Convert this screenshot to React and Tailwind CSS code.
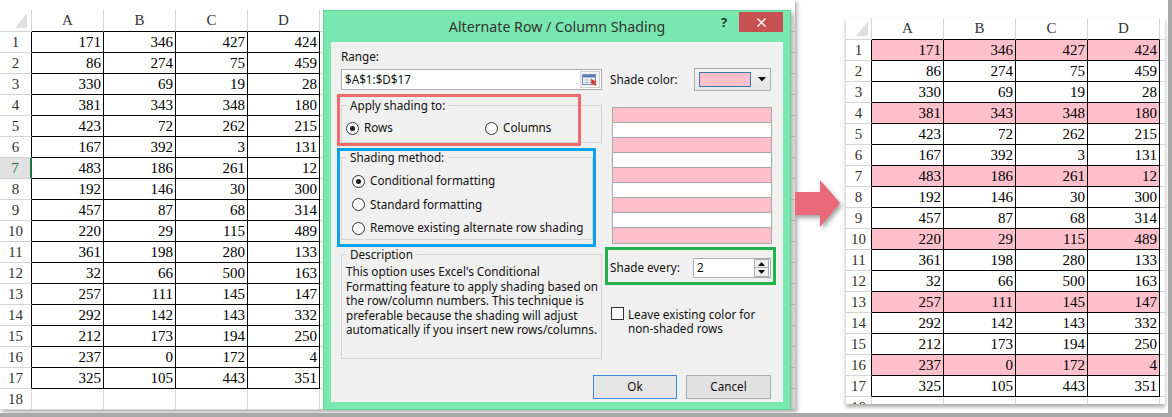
import React from 'react';

const DATA = [
  [171, 346, 427, 424],
  [86, 274, 75, 459],
  [330, 69, 19, 28],
  [381, 343, 348, 180],
  [423, 72, 262, 215],
  [167, 392, 3, 131],
  [483, 186, 261, 12],
  [192, 146, 30, 300],
  [457, 87, 68, 314],
  [220, 29, 115, 489],
  [361, 198, 280, 133],
  [32, 66, 500, 163],
  [257, 111, 145, 147],
  [292, 142, 143, 332],
  [212, 173, 194, 250],
  [237, 0, 172, 4],
  [325, 105, 443, 351],
];

const LETTERS = 'ABCDEFGHIJK'.split('');

// one excel grid, table A1:D17 drawn with black borders
function Sheet({ headW, cornerPad, extra, shaded = [], selected }) {
  const extraCols = LETTERS.slice(4, 4 + extra);
  return (
    <div className="font-['Liberation_Serif','Times_New_Roman',serif] text-[15px] text-black">
      <div className="flex h-[22px]">
        <div className={`${headW} ${cornerPad} shrink-0 border-r border-b border-[#d4d4d4] flex items-end justify-end pb-[3px]`}>
          <svg width="12" height="15"><polygon points="12,0 12,15 0,15" fill="#dfdfdf" /></svg>
        </div>
        {LETTERS.slice(0, 4).map((l) => (
          <div key={l} className="w-[72px] shrink-0 border-r border-r-[#d4d4d4] border-b border-b-black text-center leading-[21px] text-[#333]">{l}</div>
        ))}
        {/* columns past D are covered or cut off, so no letters */}
        {extraCols.map((l) => (
          <div key={l} className="w-[72px] shrink-0 border-r border-b border-[#d4d4d4]" />
        ))}
      </div>
      {DATA.map((row, i) => {
        const n = i + 1;
        const isSel = selected === n;
        const pink = shaded.includes(n);
        return (
          <div key={n} className="flex h-[21px]">
            <div className={`${headW} shrink-0 border-b border-b-[#d4d4d4] text-center leading-[20px] ${isSel ? 'bg-[#e1e1e1] border-r-2 border-r-[#217346] text-[#217346]' : 'border-r border-r-black text-[#333]'}`}>{n}</div>
            {row.map((v, j) => (
              <div key={j} className={`w-[72px] shrink-0 border-r border-b border-black text-right pr-[2px] leading-[20px] ${pink ? 'bg-[#ffc0cb]' : ''}`}>{v}</div>
            ))}
            {extraCols.map((l) => (
              <div key={l} className="w-[72px] shrink-0 border-r border-b border-[#d4d4d4]" />
            ))}
          </div>
        );
      })}
      <div className="flex h-[21px]">
        <div className={`${headW} shrink-0 border-r border-b border-[#d4d4d4] text-center leading-[20px] text-[#333]`}>18</div>
        {LETTERS.slice(0, 4 + extra).map((l) => (
          <div key={l} className="w-[72px] shrink-0 border-r border-b border-[#d4d4d4]" />
        ))}
      </div>
    </div>
  );
}

const Radio = ({ checked }) => (
  <span className="w-[13px] h-[13px] shrink-0 rounded-full border border-[#333] bg-white flex items-center justify-center">
    {checked && <span className="w-[5px] h-[5px] rounded-full bg-[#1a1a1a]" />}
  </span>
);

const Group = ({ label, className = '', children }) => (
  <fieldset className={`border border-[#d5d5d5] ${className}`}>
    <legend className="ml-[4px] px-[4px] leading-[16px]">{label}</legend>
    {children}
  </fieldset>
);

function Dialog() {
  return (
    <div className="absolute left-[323px] top-[10px] w-[468px] h-[400px] bg-[#78e8b0] border border-[#62d69c] shadow-[3px_3px_5px_rgba(0,0,0,0.3)] font-['Noto_Sans','Open_Sans',sans-serif] text-[11.7px] text-[#111]">
      {/* title bar */}
      <div className="relative h-[31px] flex items-center justify-center">
        <span className="text-[14.2px] text-[#333] mt-[1px]">Alternate Row / Column Shading</span>
        <span className="absolute left-[397px] top-[2px] text-[13px] font-bold text-[#333]">?</span>
        <div className="absolute right-[7px] top-[1px] w-[44px] h-[20px] bg-[#c75050] flex items-center justify-center">
          <svg width="9" height="9" viewBox="0 0 9 9"><path d="M0.5 0.5 L8.5 8.5 M8.5 0.5 L0.5 8.5" stroke="#fff" strokeWidth="1.4" /></svg>
        </div>
      </div>

      {/* client area */}
      <div className="mx-[7px] h-[360px] bg-[#f0f0f0] pl-[10px] pr-[11px] pt-[6px]">
        <div className="flex h-[312px]">
          <div className="w-[261px] shrink-0 flex flex-col">
            <div className="leading-[16px]">Range:</div>
            <div className="mt-[5px] h-[21px] border border-[#abadb3] bg-white flex items-center justify-between pl-[3px] pr-[1px]">
              <span>$A$1:$D$17</span>
              <span className="w-[20px] h-[17px] border border-[#d0d0d0] bg-[#f4f4f4] flex items-center justify-center">
                <svg width="16" height="12" viewBox="0 0 16 12">
                  <rect x="0.5" y="0.5" width="13" height="10" fill="#fff" stroke="#7a8ea8" />
                  <rect x="1" y="1" width="12" height="2.5" fill="#4f7fbf" />
                  <path d="M1 6 H13 M1 8.5 H13 M5 3.5 V10.5 M9 3.5 V10.5" stroke="#9aaec8" strokeWidth="0.8" />
                  <polygon points="9,5 15,8 12.5,8.6 14.5,11 13,11.8 11.2,9.4 9.5,11" fill="#d9301f" />
                </svg>
              </span>
            </div>

            <Group label="Apply shading to:" className="mt-[7px] pb-[6px]">
              <div className="flex items-center h-[16px] mt-[7px] pl-[4px]">
                <div className="w-[139px] flex items-center gap-[5px]"><Radio checked />Rows</div>
                <div className="flex items-center gap-[5px]"><Radio />Columns</div>
              </div>
            </Group>

            <Group label="Shading method:" className="mt-[6px] w-[252px] pb-[3px]">
              <div className="flex flex-col gap-[7.5px] mt-[8px] pl-[10px]">
                <div className="flex items-center gap-[5px] h-[16px]"><Radio checked />Conditional formatting</div>
                <div className="flex items-center gap-[5px] h-[16px]"><Radio />Standard formatting</div>
                <div className="flex items-center gap-[5px] h-[16px]"><Radio />Remove existing alternate row shading</div>
              </div>
            </Group>

            <Group label="Description" className="mt-[6px] h-[113px]">
              <p className="mt-[2px] pl-[4px] leading-[14.5px] whitespace-nowrap">
                This option uses Excel's Conditional<br />
                Formatting feature to apply shading based on<br />
                the row/column numbers. This technique is<br />
                preferable because the shading will adjust<br />
                automatically if you insert new rows/columns.
              </p>
            </Group>
          </div>

          <div className="w-[162px] ml-[8px] shrink-0 flex flex-col">
            <div className="mt-[20px] h-[23px] flex items-center justify-between pr-[1px]">
              <span>Shade color:</span>
              <div className="w-[77px] h-[23px] border border-[#acacac] bg-gradient-to-b from-[#f2f2f2] to-[#e5e5e5] flex items-center pl-[4px]">
                <span className="w-[52px] h-[15px] border border-[#3d7bad] bg-[#ffc0cb]" />
                <svg className="ml-[7px]" width="8" height="5" viewBox="0 0 8 5"><polygon points="0,0 8,0 4,4.5" fill="#111" /></svg>
              </div>
            </div>

            <div className="mt-[16px] ml-[2px] w-[160px] border border-[#a8a8a8] flex flex-col">
              {[0, 1, 2, 3, 4, 5, 6, 7, 8].map((i) => (
                <div key={i} className={`h-[15px] ${i < 8 ? 'border-b border-[#a8a8a8]' : ''} ${i % 2 === 0 ? 'bg-[#ffc0cb]' : 'bg-white'}`} />
              ))}
            </div>

            <div className="mt-[14px] h-[20px] flex items-center justify-between pr-[1px]">
              <span>Shade every:</span>
              <div className="w-[78px] h-[20px] border border-[#abadb3] bg-white flex items-center justify-between pl-[3px] pr-[1px]">
                <span>2</span>
                <div className="w-[15px] h-[18px] flex flex-col">
                  <span className="h-[9px] border border-[#acacac] bg-[#f0f0f0] flex items-center justify-center">
                    <svg width="7" height="4" viewBox="0 0 7 4"><polygon points="0,4 7,4 3.5,0" fill="#111" /></svg>
                  </span>
                  <span className="h-[9px] border border-t-0 border-[#acacac] bg-[#f0f0f0] flex items-center justify-center">
                    <svg width="7" height="4" viewBox="0 0 7 4"><polygon points="0,0 7,0 3.5,4" fill="#111" /></svg>
                  </span>
                </div>
              </div>
            </div>

            <div className="mt-[29px] flex items-start gap-[4px] ml-[1px]">
              <span className="w-[13px] h-[13px] shrink-0 border border-[#333] bg-white" />
              <span className="leading-[14px]">Leave existing color for<br />non-shaded rows</span>
            </div>
          </div>
        </div>

        <div className="mt-[15px] flex justify-end gap-[9px] pr-[1px]">
          <div className="w-[84px] h-[24px] border border-[#3c8be0] bg-[#e5e5e5] flex items-center justify-center">Ok</div>
          <div className="w-[85px] h-[24px] border border-[#adadad] bg-[#e1e1e1] flex items-center justify-center">Cancel</div>
        </div>
      </div>

      {/* annotation boxes drawn over the screenshot */}
      <div className="absolute left-[13px] top-[83px] w-[244px] h-[52px] border-[3px] border-[#f06a6a]" />
      <div className="absolute left-[13px] top-[137px] w-[259px] h-[99px] border-[3px] border-[#0aa2e8]" />
      <div className="absolute left-[281px] top-[236px] w-[171px] h-[38px] border-[3px] border-[#22b14c]" />
    </div>
  );
}

export default function App() {
  return (
    <div className="w-[1172px] h-[417px] bg-white border-r-4 border-b-4 border-[#a8a8a8] flex items-start overflow-hidden">
      <div className="relative w-[795px] h-[410px] shrink-0 overflow-hidden pt-[10px] bg-white shadow-[2px_2px_4px_rgba(0,0,0,0.35)]">
        <Sheet headW="w-[32px]" cornerPad="pr-[4px]" extra={7} selected={7} />
        <Dialog />
      </div>

      <div className="w-[51px] shrink-0 mt-[178px] relative z-10">
        <svg width="51" height="54" viewBox="0 0 51 54" className="drop-shadow-[2px_3px_2px_rgba(0,0,0,0.35)]">
          <polygon points="0,14 25,14 25,2 45,25 25,49 25,37 0,37" fill="#ea6a7a" />
        </svg>
      </div>

      <div className="mt-[18px] w-[319px] h-[386px] shrink-0 overflow-hidden bg-white shadow-[0_3px_4px_rgba(0,0,0,0.35)]">
        <Sheet headW="w-[26px]" cornerPad="pr-[3px]" extra={1} shaded={[1, 4, 7, 10, 13, 16]} />
      </div>
    </div>
  );
}
